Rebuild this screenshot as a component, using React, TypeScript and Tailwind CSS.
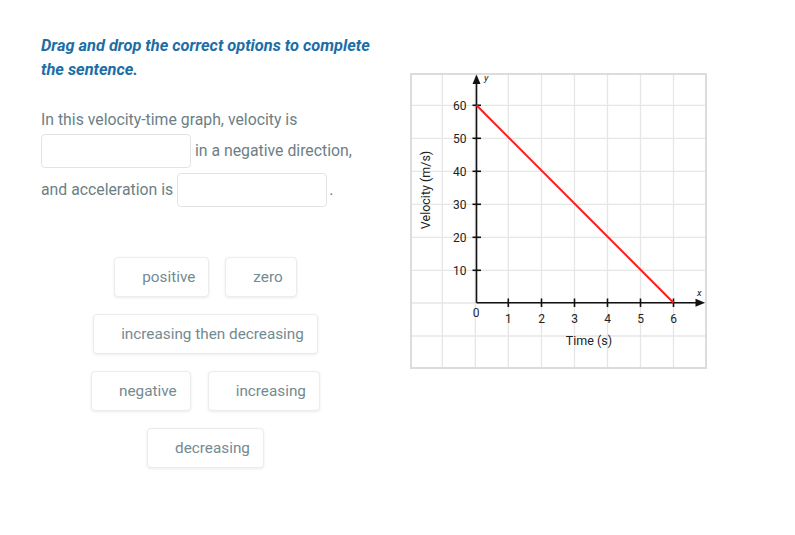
import React from "react";

const FONT = { fontFamily: "Roboto, 'Noto Sans', sans-serif" };

function Chip({ label }: { label: string }) {
  return (
    <div className="h-[40px] flex items-center pl-[27px] pr-[13px] bg-white border border-[#ececec] rounded-[4px] shadow-[0_1px_3px_rgba(0,0,0,0.08)] text-[15.3px] text-[#748a91]">
      {label}
    </div>
  );
}

function Graph() {
  const vx = [442.3, 475.3, 508.3, 541.5, 574.5, 607.5, 640.5, 673.5];
  const hy = [105.3, 138.3, 171.3, 204.3, 237.3, 270.3, 303, 336];
  const yt = [
    { y: 105.3, l: "60" },
    { y: 138.3, l: "50" },
    { y: 171.3, l: "40" },
    { y: 204.3, l: "30" },
    { y: 237.3, l: "20" },
    { y: 270.3, l: "10" },
  ];
  const xt = [508.3, 541.5, 574.5, 607.5, 640.5, 673.5];
  const ox = 476.5;
  const oy = 302.7;
  return (
    <svg width="297" height="296" viewBox="410 73 297 296" className="block" style={FONT}>
      <rect x="411" y="74" width="295" height="294" fill="white" stroke="#dcdcdc" strokeWidth="2" />
      {vx.map((x) => (
        <line key={"v" + x} x1={x} y1={75} x2={x} y2={367} stroke="#e6e6e6" strokeWidth="1.3" />
      ))}
      {hy.map((y) => (
        <line key={"h" + y} x1={412} y1={y} x2={705} y2={y} stroke="#e6e6e6" strokeWidth="1.3" />
      ))}
      <line x1={ox} y1={oy} x2={ox} y2={82} stroke="#111" strokeWidth="1.6" />
      <polygon points={`${ox},74.5 ${ox - 4},84 ${ox + 4},84`} fill="#111" />
      <line x1={ox} y1={oy} x2={697} y2={oy} stroke="#111" strokeWidth="1.6" />
      <polygon points={`705,${oy} 695.5,${oy - 4} 695.5,${oy + 4}`} fill="#111" />
      {yt.map((t) => (
        <g key={t.l}>
          <line x1={472.5} y1={t.y} x2={481} y2={t.y} stroke="#111" strokeWidth="1.6" />
          <text x={466.5} y={t.y + 4.3} fontSize="12" textAnchor="end" fill="#222">
            {t.l}
          </text>
        </g>
      ))}
      {xt.map((x, i) => (
        <g key={"x" + i}>
          <line x1={x} y1={298.5} x2={x} y2={307} stroke="#111" strokeWidth="1.6" />
          <text x={x} y={322.5} fontSize="12" textAnchor="middle" fill="#222">
            {i + 1}
          </text>
        </g>
      ))}
      <text x={476} y={316.5} fontSize="12" textAnchor="middle" fill="#222">
        0
      </text>
      <text x={484} y={81} fontSize="9.5" fontStyle="italic" fill="#222">
        y
      </text>
      <text x={697} y={295.5} fontSize="9.5" fontStyle="italic" fill="#222">
        x
      </text>
      <line x1={ox} y1={105.3} x2={673.5} y2={oy} stroke="#ff1a1a" strokeWidth="2" />
      <text x={589} y={344.5} fontSize="12.5" textAnchor="middle" fill="#222">
        Time (s)
      </text>
      <text
        x={0}
        y={0}
        fontSize="12.5"
        textAnchor="middle"
        fill="#222"
        transform="translate(429.5 190) rotate(-90)"
      >
        Velocity (m/s)
      </text>
    </svg>
  );
}

export default function App() {
  return (
    <div className="w-[795px] h-[535px] bg-white flex" style={FONT}>
      <div className="ml-[41px] w-[329px] pt-[34px] shrink-0">
        <div className="text-[16.4px] leading-[24px] font-bold italic text-[#1c6ea6]">
          Drag and drop the correct options to complete the sentence.
        </div>
        <div className="mt-[26px] text-[15.8px] text-[#6c7f86]">
          <div className="leading-[24px]">In this velocity-time graph, velocity is</div>
          <div className="mt-[2px] flex items-center">
            <div className="w-[150px] h-[34px] border border-[#e3e3e3] rounded-[4px] bg-white" />
            <span className="ml-[4px]">in a negative direction,</span>
          </div>
          <div className="mt-[5px] flex items-center">
            <span className="mr-[4px]">and acceleration is</span>
            <div className="w-[150px] h-[34px] border border-[#e3e3e3] rounded-[4px] bg-white" />
            <span className="ml-[2px]">.</span>
          </div>
        </div>
        <div className="mt-[50px] flex flex-col items-center gap-[17px]">
          <div className="flex gap-[16px]">
            <Chip label="positive" />
            <Chip label="zero" />
          </div>
          <div className="flex">
            <Chip label="increasing then decreasing" />
          </div>
          <div className="flex gap-[17px]">
            <Chip label="negative" />
            <Chip label="increasing" />
          </div>
          <div className="flex">
            <Chip label="decreasing" />
          </div>
        </div>
      </div>
      <div className="ml-[40px] mt-[73px]">
        <Graph />
      </div>
    </div>
  );
}
